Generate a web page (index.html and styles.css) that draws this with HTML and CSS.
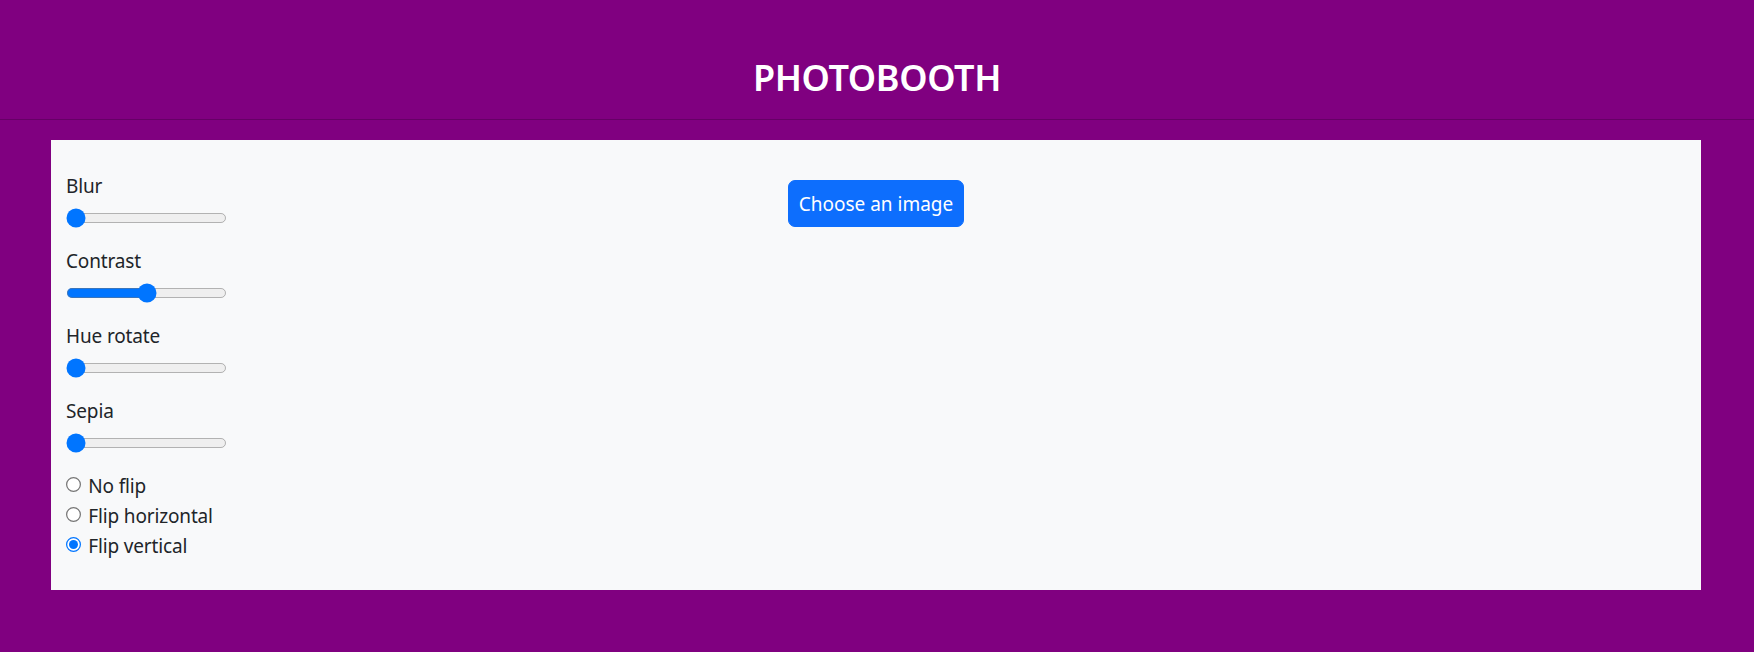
FILE: index.html
```html
<!DOCTYPE html>
<html lang="en">
<head>
<meta charset="utf-8">
<title>Photobooth</title>
<link rel="stylesheet" href="styles.css">
</head>
<body>
<header class="site-header">
  <h1 class="site-title">PHOTOBOOTH</h1>
</header>
<main class="panel">
  <div class="panel-grid">
    <aside class="controls">
      <div class="control">
        <label class="control-label" for="blur">Blur</label>
        <div class="slider-wrap"><input class="slider" type="range" id="blur" min="0" max="20" value="0"></div>
      </div>
      <div class="control">
        <label class="control-label" for="contrast">Contrast</label>
        <div class="slider-wrap"><input class="slider" type="range" id="contrast" min="0" max="200" value="100"></div>
      </div>
      <div class="control">
        <label class="control-label" for="hue">Hue rotate</label>
        <div class="slider-wrap"><input class="slider" type="range" id="hue" min="0" max="360" value="0"></div>
      </div>
      <div class="control">
        <label class="control-label" for="sepia">Sepia</label>
        <div class="slider-wrap"><input class="slider" type="range" id="sepia" min="0" max="100" value="0"></div>
      </div>
      <div class="flip-options">
        <label class="radio-row"><input class="radio" type="radio" name="flip" value="none"><span>No flip</span></label>
        <label class="radio-row"><input class="radio" type="radio" name="flip" value="horizontal"><span>Flip horizontal</span></label>
        <label class="radio-row"><input class="radio" type="radio" name="flip" value="vertical" checked><span>Flip vertical</span></label>
      </div>
    </aside>
    <div class="stage">
      <button class="choose-btn" type="button">Choose an image</button>
    </div>
    <div class="spacer"></div>
  </div>
</main>
</body>
</html>
```
FILE: styles.css
```css
html, body {
  margin: 0;
  padding: 0;
}

body {
  background: #800080;
  font-family: "Noto Sans", "Open Sans", sans-serif;
  font-size: 19px;
  line-height: 30px;
  color: #212529;
  height: 652px;
  overflow: hidden;
}

.site-header {
  padding: 55px 0 18px;
  border-bottom: 1px solid rgba(0, 0, 0, 0.2);
  text-align: center;
}

.site-title {
  margin: 0;
  font-size: 36px;
  line-height: 46px;
  font-weight: 600;
  letter-spacing: -0.35px;
  color: #ffffff;
}

.panel {
  margin: 20px 53px 0 51px;
  background: #f8f9fa;
  padding: 30px 15px;
}

.panel-grid {
  display: grid;
  grid-template-columns: 1fr auto 1fr;
  align-items: start;
}

.controls {
  display: flex;
  flex-direction: column;
}

.control-label {
  display: block;
  height: 30px;
  line-height: 32px;
  letter-spacing: -0.15px;
}

.slider-wrap {
  margin: 8px 0 17px;
  height: 20px;
}

.slider {
  display: block;
  margin: 0;
  zoom: 1.25;
}

.flip-options {
  display: flex;
  flex-direction: column;
}

.radio-row {
  display: flex;
  align-items: flex-start;
  gap: 6px;
  height: 30px;
  line-height: 32px;
  letter-spacing: -0.15px;
}

.radio {
  margin: 5.5px 0 0;
  zoom: 1.25;
}

.stage {
  padding-top: 10px;
}

.choose-btn {
  font-family: inherit;
  font-size: 19px;
  line-height: 30px;
  color: #ffffff;
  background: #0d6efd;
  border: 1px solid #0d6efd;
  border-radius: 7px;
  padding: 7.5px 10px;
  cursor: pointer;
}
```
